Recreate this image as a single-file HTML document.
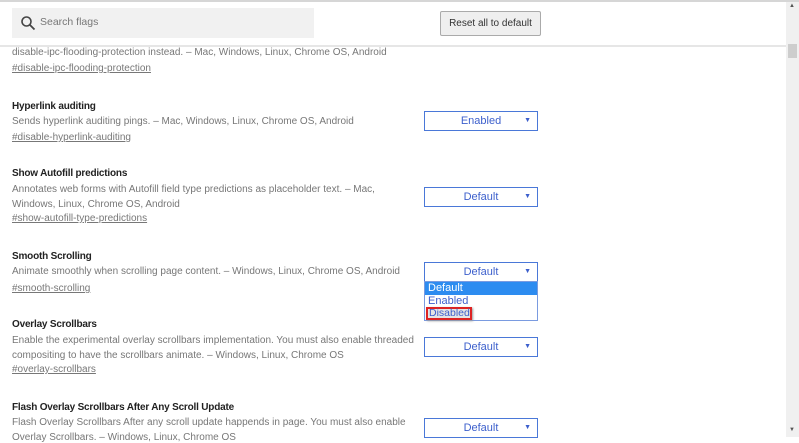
<!DOCTYPE html>
<html><head><meta charset="utf-8"><style>
*{margin:0;padding:0;box-sizing:border-box}
body{width:799px;height:437px;overflow:hidden;background:#fff;font-family:"Liberation Sans",Arial,sans-serif;position:relative}
.a{position:absolute;white-space:nowrap}
.t{font-size:10px;font-weight:bold;color:#222;letter-spacing:-0.2px}
.d{font-size:10px;color:#777}
.l{font-size:10px;color:#777;text-decoration:underline}
.s{position:absolute;left:424px;width:114px;height:20px;border:1px solid #4a78d8;background:#fff;color:#3c5fcc;font-size:11px;text-align:center;line-height:18px}
.s:after{content:"▼";position:absolute;right:6px;top:0;font-size:7px;color:#3c5fcc}
</style></head><body>
<div class="a" style="left:0;top:0;width:799px;height:2px;background:#d6d6d6"></div>
<div class="a" style="left:0;top:45px;width:786px;height:2px;background:#e6e6e6"></div>
<div class="a" style="left:12px;top:8px;width:302px;height:30px;background:#f1f1f1"></div>
<svg class="a" style="left:20px;top:15px" width="16" height="16" viewBox="0 0 16 16"><circle cx="6.5" cy="6.5" r="4.5" fill="none" stroke="#444" stroke-width="1.6"/><path d="M10 10l4.5 4.5" stroke="#444" stroke-width="1.8"/></svg>
<div class="a" style="left:40px;top:16px;font-size:10.5px;color:#777">Search flags</div>
<div class="a" style="left:440px;top:11px;width:101px;height:25px;border:1px solid #aaa;border-radius:2px;background:#efefef;font-size:10px;color:#333;text-align:center;line-height:23px">Reset all to default</div>
<div class="a" style="left:786px;top:2px;width:13px;height:435px;background:#f0f0f0"></div>
<div class="a" style="left:788px;top:44px;width:9px;height:14px;background:#cdcdcd"></div>
<div class="a" style="left:789px;top:3px;font-size:6px;color:#555">▲</div>
<div class="a" style="left:789px;top:427px;font-size:6px;color:#555">▼</div>

<div class="a d" style="left:12px;top:47px">disable-ipc-flooding-protection instead. – Mac, Windows, Linux, Chrome OS, Android</div>
<div class="a l" style="left:12px;top:63px">#disable-ipc-flooding-protection</div>

<div class="a t" style="left:12px;top:101px">Hyperlink auditing</div>
<div class="a d" style="left:12px;top:116px">Sends hyperlink auditing pings. – Mac, Windows, Linux, Chrome OS, Android</div>
<div class="a l" style="left:12px;top:132px">#disable-hyperlink-auditing</div>
<div class="s" style="top:111px">Enabled</div>

<div class="a t" style="left:12px;top:168px">Show Autofill predictions</div>
<div class="a d" style="left:12px;top:184px">Annotates web forms with Autofill field type predictions as placeholder text. – Mac,</div>
<div class="a d" style="left:12px;top:199px">Windows, Linux, Chrome OS, Android</div>
<div class="a l" style="left:12px;top:213px">#show-autofill-type-predictions</div>
<div class="s" style="top:187px">Default</div>

<div class="a t" style="left:12px;top:251px">Smooth Scrolling</div>
<div class="a d" style="left:12px;top:266px">Animate smoothly when scrolling page content. – Windows, Linux, Chrome OS, Android</div>
<div class="a l" style="left:12px;top:283px">#smooth-scrolling</div>
<div class="s" style="top:262px">Default</div>
<div class="a" style="left:424px;top:281px;width:114px;height:40px;border:1px solid #7a9be0;background:#fff;font-size:11px;color:#3c5fcc">
<div style="background:#2d8cf0;color:#fff;height:13px;line-height:13px;padding-left:3px">Default</div>
<div style="height:12px;line-height:12px;padding-left:3px">Enabled</div>
<div style="position:absolute;left:1px;top:25px;width:46px;height:13px;border:2px solid #d22;background:#e4e4e4;line-height:9px;padding-left:1px;font-size:10.5px;box-shadow:1px 1px 2px #999">Disabled</div>
</div>

<div class="a t" style="left:12px;top:319px">Overlay Scrollbars</div>
<div class="a d" style="left:12px;top:335px">Enable the experimental overlay scrollbars implementation. You must also enable threaded</div>
<div class="a d" style="left:12px;top:350px">compositing to have the scrollbars animate. – Windows, Linux, Chrome OS</div>
<div class="a l" style="left:12px;top:364px">#overlay-scrollbars</div>
<div class="s" style="top:337px">Default</div>

<div class="a t" style="left:12px;top:402px">Flash Overlay Scrollbars After Any Scroll Update</div>
<div class="a d" style="left:12px;top:417px">Flash Overlay Scrollbars After any scroll update happends in page. You must also enable</div>
<div class="a d" style="left:12px;top:432px">Overlay Scrollbars. – Windows, Linux, Chrome OS</div>
<div class="s" style="top:418px">Default</div>
</body></html>
